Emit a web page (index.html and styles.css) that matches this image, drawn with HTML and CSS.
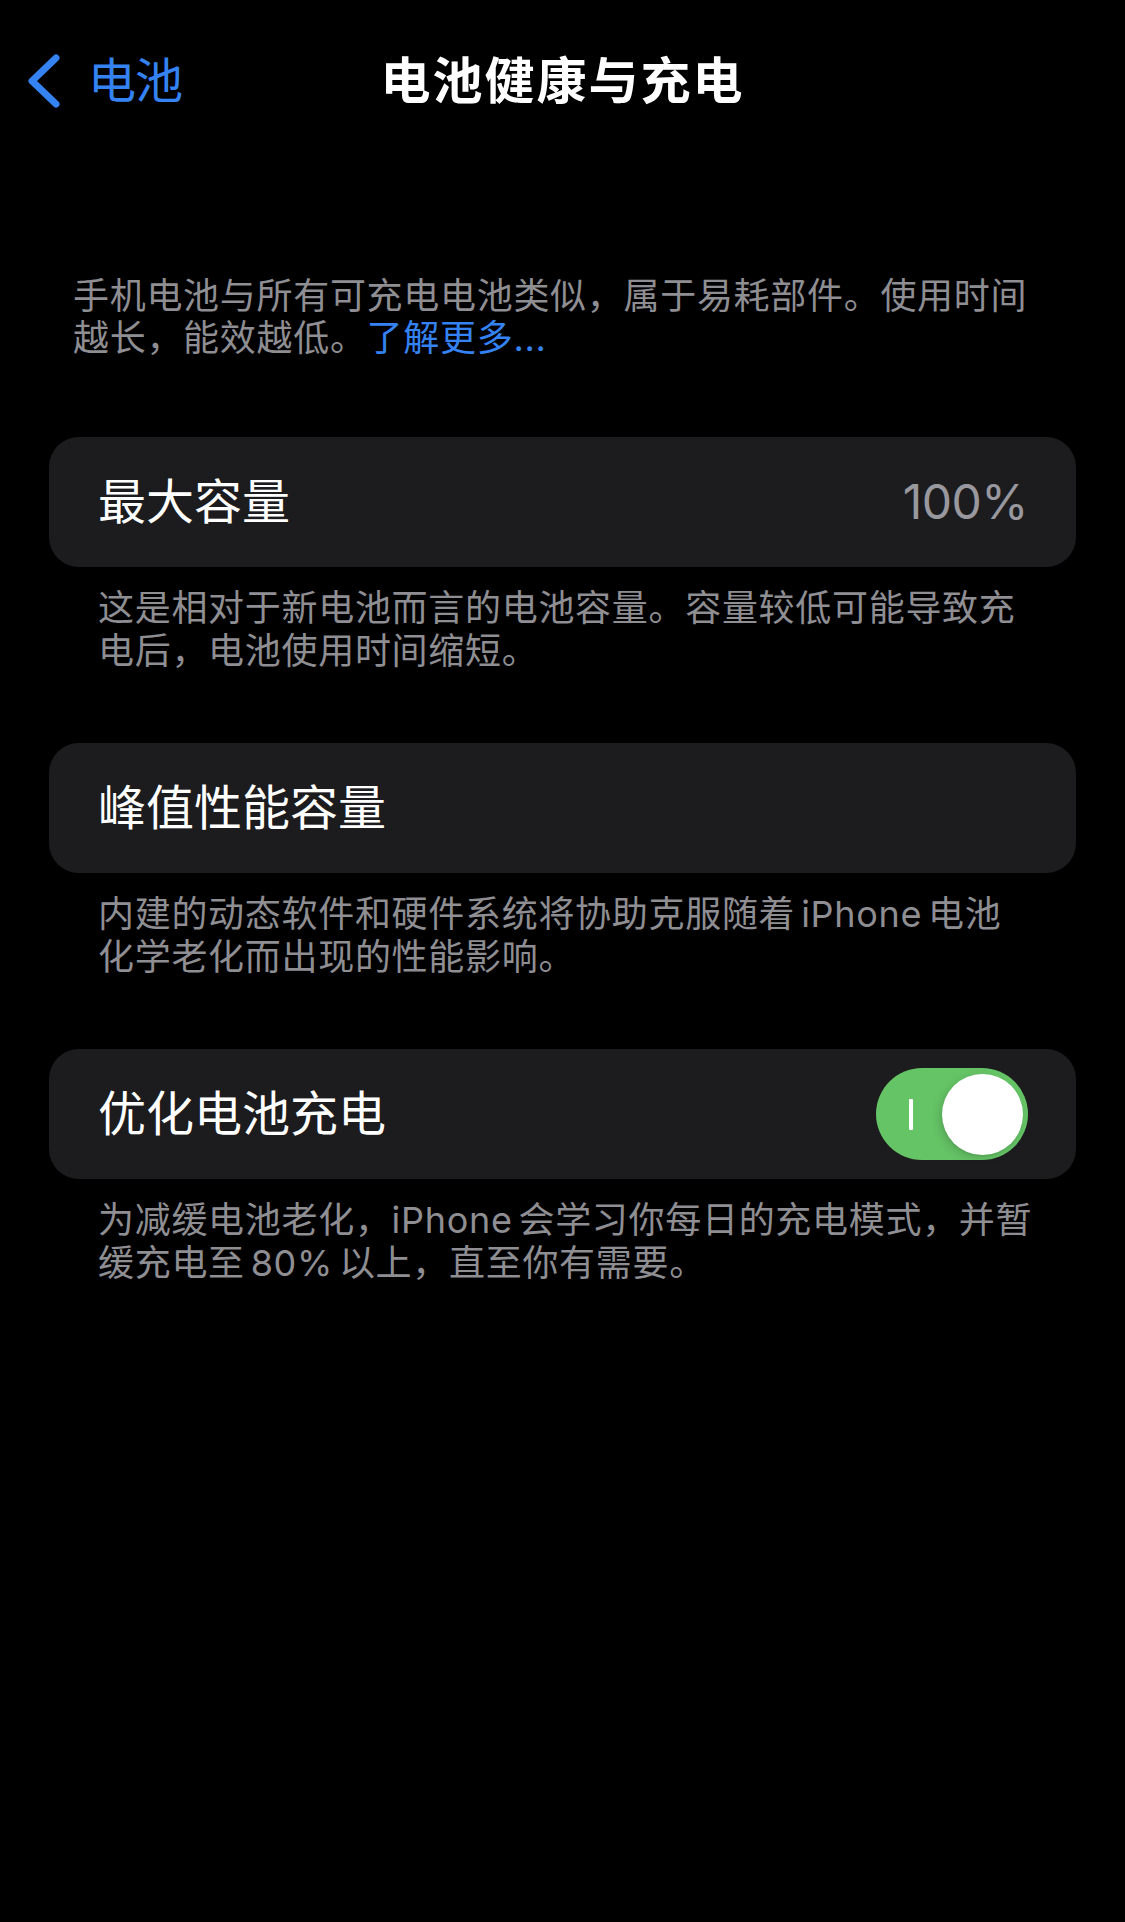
FILE: index.html
```html
<!DOCTYPE html>
<html lang="zh-CN">
<head>
<meta charset="utf-8">
<title>电池健康与充电</title>
<link rel="stylesheet" href="styles.css">
</head>
<body>
<div class="screen">
  <header class="nav">
    <a class="back" href="#">
      <svg class="chevron" width="40" height="56" viewBox="0 0 40 56" aria-hidden="true">
        <polyline points="32,5 8,28 32,51" fill="none" stroke="currentColor" stroke-width="7" stroke-linecap="round" stroke-linejoin="round"/>
      </svg>
      <span class="back-label">电池</span>
    </a>
    <h1 class="title">电池健康与充电</h1>
    <div class="nav-spacer"></div>
  </header>

  <main class="content">
    <p class="intro">手机电池与所有可充电电池类似，属于易耗部件。使用时间<br>越长，能效越低。<a class="link" href="#">了解更多...</a></p>

    <section class="group">
      <div class="card">
        <span class="label">最大容量</span>
        <span class="value">100%</span>
      </div>
      <p class="footnote">这是相对于新电池而言的电池容量。容量较低可能导致充<br>电后，电池使用时间缩短。</p>
    </section>

    <section class="group">
      <div class="card">
        <span class="label">峰值性能容量</span>
      </div>
      <p class="footnote">内建的动态软件和硬件系统将协助克服随着 iPhone 电池<br>化学老化而出现的性能影响。</p>
    </section>

    <section class="group">
      <div class="card">
        <span class="label">优化电池充电</span>
        <span class="switch is-on" role="switch" aria-checked="true">
          <span class="switch-mark"></span>
          <span class="switch-knob"></span>
        </span>
      </div>
      <p class="footnote">为减缓电池老化，iPhone 会学习你每日的充电模式，并暂<br>缓充电至 80% 以上，直至你有需要。</p>
    </section>
  </main>
</div>
</body>
</html>
```

FILE: styles.css
```css
* {
  box-sizing: border-box;
}

html, body {
  margin: 0;
  padding: 0;
  background: #000;
}

body {
  font-family: Inter, "Noto Sans CJK SC", "Noto Sans", sans-serif;
  color: #fff;
}

.screen {
  width: 1125px;
  min-height: 1922px;
  background: #000;
}

/* Navigation bar */
.nav {
  height: 162px;
  display: grid;
  grid-template-columns: 1fr auto 1fr;
  align-items: center;
}

.back {
  display: flex;
  align-items: center;
  gap: 24px;
  padding-left: 24px;
  color: #3583f2;
  text-decoration: none;
}

.chevron {
  display: block;
  flex: none;
}

.back-label {
  font-size: 48px;
  line-height: 56px;
  letter-spacing: -1px;
}

.title {
  margin: 0;
  font-size: 50px;
  line-height: 60px;
  font-weight: 600;
  letter-spacing: 2px;
  color: #fff;
}

/* Content */
.content {
  display: flex;
  flex-direction: column;
  gap: 70px;
}

.intro {
  margin: 113px 0 8px;
  padding: 0 20px 0 73px;
  font-size: 36px;
  line-height: 42px;
  letter-spacing: 0.7px;
  word-spacing: -4px;
  color: #8e8e93;
}

.link {
  color: #3583f2;
  text-decoration: none;
}

.group {
  display: flex;
  flex-direction: column;
  gap: 20px;
  padding: 0 49px;
}

.card {
  height: 130px;
  border-radius: 30px;
  background: #1c1c1e;
  display: flex;
  align-items: center;
  justify-content: space-between;
  padding: 0 48px 0 49px;
}

.label {
  font-size: 48px;
  line-height: 56px;
  color: #fff;
}

.value {
  font-size: 48px;
  line-height: 56px;
  color: #98989e;
  letter-spacing: -0.5px;
}

.footnote {
  margin: 0;
  padding: 0 0 0 49px;
  font-size: 36px;
  line-height: 43px;
  letter-spacing: 0.7px;
  word-spacing: -5px;
  color: #8e8e93;
}

/* Toggle switch */
.switch {
  width: 152px;
  height: 92px;
  border-radius: 46px;
  background: #65c466;
  display: flex;
  align-items: center;
  justify-content: space-between;
  padding: 0 5px 0 33px;
}

.switch-mark {
  width: 4px;
  height: 31px;
  border-radius: 1px;
  background: #fff;
}

.switch-knob {
  width: 81px;
  height: 81px;
  border-radius: 50%;
  background: #fff;
  box-shadow: -3px 3px 10px rgba(0, 0, 0, 0.14), 0 2px 2px rgba(0, 0, 0, 0.06);
}
```
